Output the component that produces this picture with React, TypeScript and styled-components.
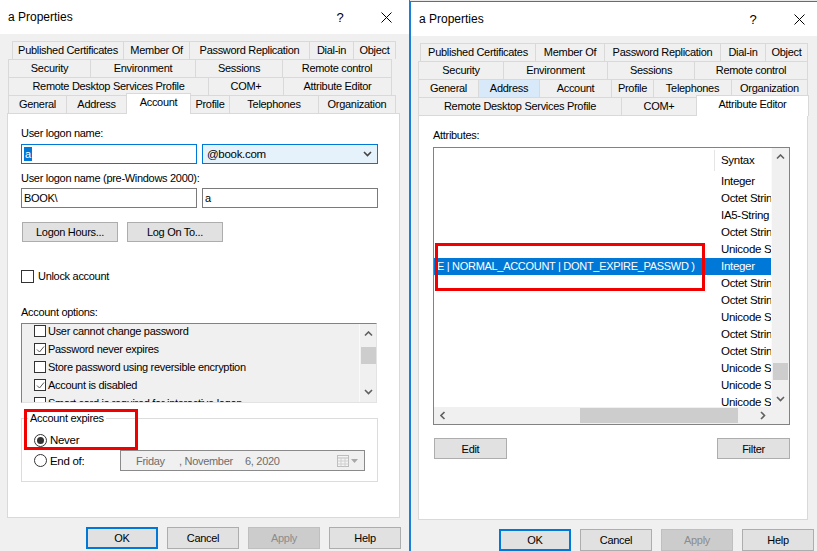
import React from "react";
import styled, { createGlobalStyle, css } from "styled-components";

const GlobalStyle = createGlobalStyle`
  html, body {
    margin: 0;
    padding: 0;
    overflow: hidden;
    background: #e9e9e9;
  }
  body {
    font-family: "Liberation Sans", Arial, sans-serif;
    font-size: 11px;
    letter-spacing: -0.3px;
    color: #000;
  }
`;

const Desktop = styled.div`
  display: flex;
  align-items: flex-start;
  width: 817px;
  height: 551px;
  overflow: hidden;
`;

const Window = styled.div<{ $side: "left" | "right" }>`
  position: relative;
  flex: none;
  display: flex;
  flex-direction: column;
  box-sizing: border-box;
  height: 560px;
  background: #f0f0f0;
  ${(p) =>
    p.$side === "left"
      ? css`
          width: 410px;
          border-right: 1px solid #1c7ed6;
        `
      : css`
          width: 412px;
          margin-top: 1px;
          border-left: 1px solid #1c7ed6;
          border-top: 1px solid #1c7ed6;
        `}
`;

const TitleBar = styled.div`
  display: flex;
  align-items: center;
  height: 34px;
  padding-left: 8px;
  background: #fff;
  font-size: 12px;
  letter-spacing: 0;
`;

const Title = styled.div`
  flex: 1;
`;

const CaptionButton = styled.div`
  display: flex;
  align-items: center;
  justify-content: center;
  width: 46px;
  height: 34px;
  font-size: 13px;
`;

const Body = styled.div`
  display: flex;
  flex-direction: column;
  padding: 7px 0 0 7px;
`;

const TabStrip = styled.div`
  display: flex;
  flex-direction: column;
`;

const TabRow = styled.div<{ $indent: number }>`
  display: flex;
  height: 18px;
  padding-left: ${(p) => p.$indent}px;
`;

const Tab = styled.div<{ $width: number; $state?: "selected" | "hover" }>`
  flex: none;
  box-sizing: border-box;
  width: ${(p) => p.$width}px;
  height: 18px;
  border-top: 1px solid #d9d9d9;
  border-right: 1px solid #d9d9d9;
  background: #f0f0f0;
  text-align: center;
  line-height: 17px;
  white-space: nowrap;

  &:first-child {
    border-left: 1px solid #d9d9d9;
  }

  ${(p) =>
    p.$state === "hover" &&
    css`
      background: #d8eaf9;
    `}

  ${(p) =>
    p.$state === "selected" &&
    css`
      position: relative;
      z-index: 2;
      align-self: flex-end;
      height: 21px;
      margin-bottom: -1px;
      margin-left: -1px;
      width: ${p.$width + 1}px;
      border-left: 1px solid #d9d9d9;
      background: #fff;
    `}
`;

const Panel = styled.div<{ $width: number; $pad: number }>`
  display: flex;
  flex-direction: column;
  align-items: flex-start;
  box-sizing: border-box;
  width: ${(p) => p.$width}px;
  height: 405px;
  padding: 12px 0 0 ${(p) => p.$pad}px;
  background: #fff;
  border: 1px solid #d9d9d9;
`;

const Label = styled.div<{ $mt?: number }>`
  height: 14px;
  line-height: 14px;
  margin-top: ${(p) => p.$mt ?? 0}px;
  white-space: nowrap;
`;

const FieldRow = styled.div<{ $mt: number; $gap?: number; $indent?: number }>`
  display: flex;
  align-items: center;
  gap: ${(p) => p.$gap ?? 5}px;
  margin-top: ${(p) => p.$mt}px;
  padding-left: ${(p) => p.$indent ?? 0}px;
`;

const TextBox = styled.div<{ $focused?: boolean }>`
  box-sizing: border-box;
  width: 176px;
  height: 20px;
  padding-left: 2px;
  line-height: 18px;
  background: #fff;
  border: 1px solid ${(p) => (p.$focused ? "#0078d7" : "#7a7a7a")};
  white-space: nowrap;
  overflow: hidden;
`;

const Highlight = styled.span`
  padding: 1px 1px;
  background: #0078d7;
  color: #fff;
`;

const Combo = styled.div`
  display: flex;
  align-items: center;
  justify-content: space-between;
  box-sizing: border-box;
  width: 176px;
  height: 20px;
  padding: 0 5px 0 4px;
  background: #e5f1fb;
  border: 1px solid #0078d7;
  font-size: 11.5px;
`;

const PushButton = styled.button<{ $w: number; $h: number; $variant?: "default" | "disabled" }>`
  box-sizing: border-box;
  width: ${(p) => p.$w}px;
  height: ${(p) => p.$h}px;
  padding: 0;
  font-family: inherit;
  font-size: 11px;
  letter-spacing: -0.3px;
  color: #000;
  background: #e1e1e1;
  border: 1px solid #adadad;

  ${(p) =>
    p.$variant === "default" &&
    css`
      border: 2px solid #0078d7;
    `}
  ${(p) =>
    p.$variant === "disabled" &&
    css`
      background: #cccccc;
      border-color: #bfbfbf;
      color: #8c8c8c;
    `}
`;

const ButtonRow = styled.div`
  display: flex;
  justify-content: flex-end;
  gap: 9px;
  margin-top: 9px;
  padding-right: 8px;
`;

const CheckBox = styled.span<{ $size: number }>`
  display: inline-flex;
  align-items: center;
  justify-content: center;
  flex: none;
  box-sizing: border-box;
  width: ${(p) => p.$size}px;
  height: ${(p) => p.$size}px;
  background: #fff;
  border: 1px solid #333;
`;

const CheckRow = styled.div<{ $mt: number }>`
  display: flex;
  align-items: center;
  gap: 4px;
  height: 14px;
  margin-top: ${(p) => p.$mt}px;
`;

const OptionsList = styled.div`
  display: flex;
  box-sizing: border-box;
  width: 356px;
  height: 80px;
  margin-top: 4px;
  background: #f0f0f0;
  border-top: 1px solid #828282;
  border-left: 1px solid #828282;
  border-right: 1px solid #e3e3e3;
  border-bottom: 1px solid #e3e3e3;
`;

const OptionItems = styled.div`
  flex: 1;
  overflow: hidden;
`;

const OptionItem = styled.div`
  display: flex;
  align-items: center;
  gap: 2px;
  height: 18px;
  padding-left: 12px;
  white-space: nowrap;

  &:first-child {
    margin-top: -2px;
  }
`;

const VScroll = styled.div<{ $w: number; $arrow: number }>`
  display: flex;
  flex-direction: column;
  flex: none;
  width: ${(p) => p.$w}px;
  background: #f0f0f0;
  border-left: 1px solid #fafafa;
  box-sizing: border-box;

  & > span {
    display: flex;
    align-items: center;
    justify-content: center;
    height: ${(p) => p.$arrow}px;
    flex: none;
  }
`;

const Track = styled.div<{ $horizontal?: boolean }>`
  flex: 1;
  display: flex;
  flex-direction: ${(p) => (p.$horizontal ? "row" : "column")};
  align-items: center;
`;

const Thumb = styled.div<{ $offset: number; $length: number; $horizontal?: boolean }>`
  flex: none;
  background: #cdcdcd;
  ${(p) =>
    p.$horizontal
      ? css`
          margin-left: ${p.$offset}px;
          width: ${p.$length}px;
          height: 15px;
        `
      : css`
          margin-top: ${p.$offset}px;
          height: ${p.$length}px;
          width: 15px;
        `}
`;

const GroupBox = styled.fieldset`
  box-sizing: border-box;
  width: 357px;
  min-width: 0;
  margin: 8px 0 0;
  padding: 0 0 10px 12px;
  border: 1px solid #dcdcdc;
`;

const GroupLegend = styled.legend`
  margin-left: -6px;
  padding: 0 2px;
  line-height: 14px;
`;

const RadioRow = styled.div<{ $mt: number; $h: number }>`
  display: flex;
  align-items: center;
  height: ${(p) => p.$h}px;
  margin-top: ${(p) => p.$mt}px;
`;

const Radio = styled.span<{ $checked?: boolean }>`
  display: inline-flex;
  align-items: center;
  justify-content: center;
  flex: none;
  box-sizing: border-box;
  width: 13px;
  height: 13px;
  margin-right: 3px;
  border-radius: 50%;
  border: 1px solid #333;
  background: #fff;

  &::after {
    content: "";
    width: 7px;
    height: 7px;
    border-radius: 50%;
    background: ${(p) => (p.$checked ? "#333" : "transparent")};
  }
`;

const RadioLabel = styled.span<{ $w?: number }>`
  width: ${(p) => (p.$w ? `${p.$w}px` : "auto")};
  font-size: 11.5px;
`;

const DatePicker = styled.div`
  display: flex;
  align-items: center;
  box-sizing: border-box;
  width: 245px;
  height: 21px;
  padding: 0 6px 0 15px;
  background: #f0f0f0;
  border: 1px solid #8a8a8a;
  color: #6d6d6d;
`;

const DatePart = styled.span<{ $w?: number }>`
  width: ${(p) => (p.$w ? `${p.$w}px` : "auto")};
  white-space: nowrap;
`;

const DateIcon = styled.span`
  display: flex;
  align-items: center;
  gap: 2px;
  margin-left: auto;
`;

const AttrList = styled.div`
  display: grid;
  grid-template-columns: 337px 18px;
  grid-template-rows: 259px 17px;
  box-sizing: border-box;
  width: 357px;
  height: 278px;
  margin-top: 5px;
  border: 1px solid #828282;
`;

const Viewport = styled.div`
  overflow: hidden;
  background: #fff;
`;

const AttrHeader = styled.div`
  display: grid;
  grid-template-columns: 280px 1fr;
  height: 25px;
  align-items: center;
`;

const HeaderCell = styled.div`
  height: 21px;
  line-height: 21px;
  padding-left: 6px;
  border-left: 1px solid #e5e5e5;
  white-space: nowrap;
  font-size: 11.5px;
`;

const AttrRow = styled.div<{ $selected?: boolean }>`
  display: grid;
  grid-template-columns: 280px 1fr;
  height: 17px;
  line-height: 17px;
  white-space: nowrap;
  font-size: 11px;
  ${(p) =>
    p.$selected &&
    css`
      background: #0078d7;
      color: #fff;
    `}
`;

const ValueCell = styled.div`
  padding-left: 3px;
  overflow: hidden;
`;

const SyntaxCell = styled.div`
  padding-left: 7px;
  overflow: hidden;
  font-size: 11.5px;
`;

const HScroll = styled.div`
  display: flex;
  background: #f0f0f0;

  & > span {
    display: flex;
    align-items: center;
    justify-content: center;
    width: 17px;
    flex: none;
  }
`;

const Corner = styled.div`
  background: #f0f0f0;
`;

const PanelButtons = styled.div`
  display: flex;
  justify-content: space-between;
  box-sizing: border-box;
  width: 357px;
  margin-top: 13px;
  padding-left: 1px;
`;

const Annotation = styled.div<{ $left: number; $top: number; $w: number; $h: number }>`
  position: absolute;
  z-index: 5;
  left: ${(p) => p.$left}px;
  top: ${(p) => p.$top}px;
  width: ${(p) => p.$w}px;
  height: ${(p) => p.$h}px;
  box-sizing: border-box;
  border: 3px solid #f20000;
  pointer-events: none;
`;

type Dir = "up" | "down" | "left" | "right";

const Chevron: React.FC<{ dir: Dir; color?: string }> = ({ dir, color = "#606060" }) => {
  const horizontal = dir === "left" || dir === "right";
  const points = {
    up: "1,4.5 4.5,1 8,4.5",
    down: "1,1 4.5,4.5 8,1",
    left: "4.5,1 1,4.5 4.5,8",
    right: "1,1 4.5,4.5 1,8",
  }[dir];
  return (
    <svg width={horizontal ? 6 : 9} height={horizontal ? 9 : 6} viewBox={horizontal ? "0 0 6 9" : "0 0 9 6"}>
      <polyline points={points} fill="none" stroke={color} strokeWidth={1.6} />
    </svg>
  );
};

const CheckMark: React.FC = () => (
  <svg width="9" height="9" viewBox="0 0 9 9">
    <polyline points="1,4.5 3.5,7 8,1.5" fill="none" stroke="#555" strokeWidth={1} />
  </svg>
);

const CloseGlyph: React.FC = () => (
  <svg width="11" height="11" viewBox="0 0 11 11">
    <line x1="0.5" y1="0.5" x2="10.5" y2="10.5" stroke="#000" strokeWidth={1} />
    <line x1="10.5" y1="0.5" x2="0.5" y2="10.5" stroke="#000" strokeWidth={1} />
  </svg>
);

const CalendarGlyph: React.FC = () => (
  <>
    <svg width="12" height="12" viewBox="0 0 12 12">
      <rect x="0.5" y="0.5" width="11" height="11" fill="#f4f4f4" stroke="#bdbdbd" />
      <line x1="0.5" y1="3" x2="11.5" y2="3" stroke="#bdbdbd" />
      <line x1="4" y1="3" x2="4" y2="11.5" stroke="#d0d0d0" />
      <line x1="8" y1="3" x2="8" y2="11.5" stroke="#d0d0d0" />
      <line x1="0.5" y1="6" x2="11.5" y2="6" stroke="#d0d0d0" />
      <line x1="0.5" y1="9" x2="11.5" y2="9" stroke="#d0d0d0" />
    </svg>
    <svg width="7" height="4" viewBox="0 0 7 4">
      <polygon points="0,0 7,0 3.5,4" fill="#a8a8a8" />
    </svg>
  </>
);

type TabSpec = { label: string; width: number; state?: "selected" | "hover" };
type TabRowSpec = { indent: number; tabs: TabSpec[] };

const leftTabs: TabRowSpec[] = [
  {
    indent: 5,
    tabs: [
      { label: "Published Certificates", width: 112 },
      { label: "Member Of", width: 66 },
      { label: "Password Replication", width: 120 },
      { label: "Dial-in", width: 44 },
      { label: "Object", width: 42 },
    ],
  },
  {
    indent: 1,
    tabs: [
      { label: "Security", width: 83 },
      { label: "Environment", width: 105 },
      { label: "Sessions", width: 87 },
      { label: "Remote control", width: 109 },
    ],
  },
  {
    indent: 1,
    tabs: [
      { label: "Remote Desktop Services Profile", width: 201 },
      { label: "COM+", width: 75 },
      { label: "Attribute Editor", width: 108 },
    ],
  },
  {
    indent: 1,
    tabs: [
      { label: "General", width: 59 },
      { label: "Address", width: 60 },
      { label: "Account", width: 64, state: "selected" },
      { label: "Profile", width: 39 },
      { label: "Telephones", width: 89 },
      { label: "Organization", width: 77 },
    ],
  },
];

const rightTabs: TabRowSpec[] = [
  {
    indent: 2,
    tabs: [
      { label: "Published Certificates", width: 116 },
      { label: "Member Of", width: 69 },
      { label: "Password Replication", width: 116 },
      { label: "Dial-in", width: 45 },
      { label: "Object", width: 42 },
    ],
  },
  {
    indent: 0,
    tabs: [
      { label: "Security", width: 86 },
      { label: "Environment", width: 104 },
      { label: "Sessions", width: 87 },
      { label: "Remote control", width: 113 },
    ],
  },
  {
    indent: 0,
    tabs: [
      { label: "General", width: 61 },
      { label: "Address", width: 61, state: "hover" },
      { label: "Account", width: 72 },
      { label: "Profile", width: 42 },
      { label: "Telephones", width: 78 },
      { label: "Organization", width: 76 },
    ],
  },
  {
    indent: 0,
    tabs: [
      { label: "Remote Desktop Services Profile", width: 204 },
      { label: "COM+", width: 75 },
      { label: "Attribute Editor", width: 112, state: "selected" },
    ],
  },
];

const accountOptions = [
  { label: "User cannot change password", checked: false },
  { label: "Password never expires", checked: true },
  { label: "Store password using reversible encryption", checked: false },
  { label: "Account is disabled", checked: true },
  { label: "Smart card is required for interactive logon", checked: false },
];

const syntaxRows = [
  "Integer",
  "Octet String",
  "IA5-String",
  "Octet String",
  "Unicode String",
  "Integer",
  "Octet String",
  "Octet String",
  "Unicode String",
  "Octet String",
  "Octet String",
  "Unicode String",
  "Unicode String",
  "Unicode String",
];

const SELECTED_ROW = 5;

const Tabs: React.FC<{ rows: TabRowSpec[] }> = ({ rows }) => (
  <TabStrip>
    {rows.map((row, i) => (
      <TabRow key={i} $indent={row.indent}>
        {row.tabs.map((t) => (
          <Tab key={t.label} $width={t.width} $state={t.state}>
            {t.label}
          </Tab>
        ))}
      </TabRow>
    ))}
  </TabStrip>
);

const Caption: React.FC = () => (
  <TitleBar>
    <Title>a Properties</Title>
    <CaptionButton>?</CaptionButton>
    <CaptionButton>
      <CloseGlyph />
    </CaptionButton>
  </TitleBar>
);

const DialogButtons: React.FC = () => (
  <ButtonRow>
    <PushButton $w={72} $h={22} $variant="default">
      OK
    </PushButton>
    <PushButton $w={72} $h={22}>
      Cancel
    </PushButton>
    <PushButton $w={72} $h={22} $variant="disabled">
      Apply
    </PushButton>
    <PushButton $w={72} $h={22}>
      Help
    </PushButton>
  </ButtonRow>
);

const AccountPage: React.FC = () => (
  <Window $side="left">
    <Caption />
    <Body>
      <Tabs rows={leftTabs} />
      <Panel $width={393} $pad={13}>
        <Label>User logon name:</Label>
        <FieldRow $mt={4}>
          <TextBox $focused>
            <Highlight>a</Highlight>
          </TextBox>
          <Combo>
            <span>@book.com</span>
            <Chevron dir="down" color="#444" />
          </Combo>
        </FieldRow>
        <Label $mt={7}>User logon name (pre-Windows 2000):</Label>
        <FieldRow $mt={3}>
          <TextBox>BOOK\</TextBox>
          <TextBox>a</TextBox>
        </FieldRow>
        <FieldRow $mt={14} $gap={9} $indent={1}>
          <PushButton $w={96} $h={20}>
            Logon Hours...
          </PushButton>
          <PushButton $w={96} $h={20}>
            Log On To...
          </PushButton>
        </FieldRow>
        <CheckRow $mt={27}>
          <CheckBox $size={13} />
          <span>Unlock account</span>
        </CheckRow>
        <Label $mt={22}>Account options:</Label>
        <OptionsList>
          <OptionItems>
            {accountOptions.map((o) => (
              <OptionItem key={o.label}>
                <CheckBox $size={12}>{o.checked && <CheckMark />}</CheckBox>
                <span>{o.label}</span>
              </OptionItem>
            ))}
          </OptionItems>
          <VScroll $w={17} $arrow={20}>
            <span>
              <Chevron dir="up" />
            </span>
            <Track>
              <Thumb $offset={3} $length={17} />
            </Track>
            <span>
              <Chevron dir="down" />
            </span>
          </VScroll>
        </OptionsList>
        <GroupBox>
          <GroupLegend>Account expires</GroupLegend>
          <RadioRow $mt={6} $h={18}>
            <Radio $checked />
            <RadioLabel>Never</RadioLabel>
          </RadioRow>
          <RadioRow $mt={1} $h={21}>
            <Radio />
            <RadioLabel $w={70}>End of:</RadioLabel>
            <DatePicker>
              <DatePart $w={43}>Friday</DatePart>
              <DatePart $w={66}>, November</DatePart>
              <DatePart>6, 2020</DatePart>
              <DateIcon>
                <CalendarGlyph />
              </DateIcon>
            </DatePicker>
          </RadioRow>
        </GroupBox>
      </Panel>
      <DialogButtons />
    </Body>
    <Annotation $left={24} $top={409} $w={114} $h={41} />
  </Window>
);

const AttributePage: React.FC = () => (
  <Window $side="right">
    <Caption />
    <Body>
      <Tabs rows={rightTabs} />
      <Panel $width={390} $pad={14}>
        <Label>Attributes:</Label>
        <AttrList>
          <Viewport>
            <AttrHeader>
              <div />
              <HeaderCell>Syntax</HeaderCell>
            </AttrHeader>
            {syntaxRows.map((s, i) => (
              <AttrRow key={i} $selected={i === SELECTED_ROW}>
                <ValueCell>
                  {i === SELECTED_ROW ? "E | NORMAL_ACCOUNT | DONT_EXPIRE_PASSWD )" : ""}
                </ValueCell>
                <SyntaxCell>{s}</SyntaxCell>
              </AttrRow>
            ))}
          </Viewport>
          <VScroll $w={18} $arrow={17}>
            <span>
              <Chevron dir="up" />
            </span>
            <Track>
              <Thumb $offset={198} $length={17} />
            </Track>
            <span>
              <Chevron dir="down" />
            </span>
          </VScroll>
          <HScroll>
            <span>
              <Chevron dir="left" />
            </span>
            <Track $horizontal>
              <Thumb $horizontal $offset={129} $length={158} />
            </Track>
            <span>
              <Chevron dir="right" />
            </span>
          </HScroll>
          <Corner />
        </AttrList>
        <PanelButtons>
          <PushButton $w={73} $h={21}>
            Edit
          </PushButton>
          <PushButton $w={73} $h={21}>
            Filter
          </PushButton>
        </PanelButtons>
      </Panel>
      <DialogButtons />
    </Body>
    <Annotation $left={24} $top={241} $w={270} $h={48} />
  </Window>
);

const App: React.FC = () => (
  <>
    <GlobalStyle />
    <Desktop>
      <AccountPage />
      <AttributePage />
    </Desktop>
  </>
);

export default App;
